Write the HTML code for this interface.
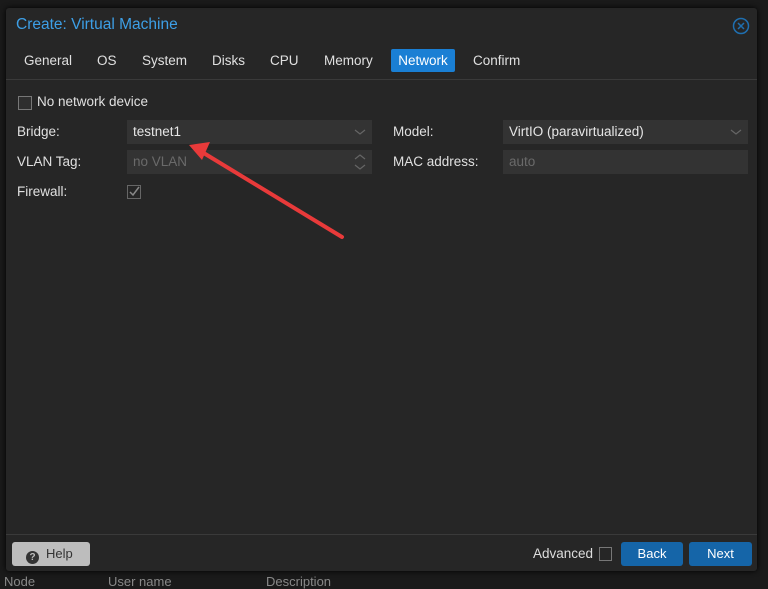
<!DOCTYPE html><html><head><style>
body{margin:0;width:768px;height:583px;background:#1a1a1a;font-family:"Liberation Sans",sans-serif;position:relative;overflow:hidden;color:#ddd}
.a{position:absolute}
.dlg{left:6px;top:8px;width:751px;height:563px;background:#262626;border-radius:3px;box-shadow:0 0 6px #000}
.t{font-size:13.5px;color:#e0e0e0}
.f{background:#333;height:24px}
.ft{font-size:13.5px;color:#e6e6e6;line-height:24px;padding-left:6px}
.btn{background:#1565a8;color:#fff;font-size:13px;text-align:center;line-height:24px;border-radius:3px;height:24px}
</style></head><body>
<div class="a dlg"></div>
<div class="a" style="left:16px;top:16px;font-size:15.5px;color:#3d9fe6">Create: Virtual Machine</div>
<svg class="a" style="left:732px;top:17px" width="18" height="18"><circle cx="9" cy="9" r="7.5" fill="none" stroke="#1f6fb0" stroke-width="1.5"/><path d="M6 6l6 6M12 6l-6 6" stroke="#1f6fb0" stroke-width="1.5"/></svg>
<div class="a t" style="left:24px;top:53px">General</div>
<div class="a t" style="left:97px;top:53px">OS</div>
<div class="a t" style="left:142px;top:53px">System</div>
<div class="a t" style="left:212px;top:53px">Disks</div>
<div class="a t" style="left:270px;top:53px">CPU</div>
<div class="a t" style="left:324px;top:53px">Memory</div>
<div class="a t" style="left:391px;top:49px;width:64px;height:23px;background:#1a7fd4;border-radius:2px;line-height:23px;text-align:center;color:#fff">Network</div>
<div class="a t" style="left:473px;top:53px">Confirm</div>
<div class="a" style="left:6px;top:79px;width:751px;height:1px;background:#3a3a3a"></div>
<div class="a" style="left:18px;top:96px;width:12px;height:12px;border:1px solid #777;background:#2e2e2e"></div>
<div class="a t" style="left:37px;top:94px">No network device</div>
<div class="a t" style="left:17px;top:124px">Bridge:</div>
<div class="a f" style="left:127px;top:120px;width:245px"><div class="ft">testnet1</div></div>
<svg class="a" style="left:354px;top:128px" width="12" height="8"><path d="M1 2l5 4 5-4" fill="none" stroke="#666" stroke-width="1.2"/></svg>
<div class="a t" style="left:17px;top:154px">VLAN Tag:</div>
<div class="a f" style="left:127px;top:150px;width:245px"><div class="ft" style="color:#6a6a6a">no VLAN</div></div>
<svg class="a" style="left:354px;top:152px" width="12" height="20"><path d="M1 7l5-4 5 4M1 13l5 4 5-4" fill="none" stroke="#666" stroke-width="1.2"/></svg>
<div class="a t" style="left:17px;top:184px">Firewall:</div>
<div class="a" style="left:127px;top:185px;width:12px;height:12px;border:1px solid #666"></div>
<svg class="a" style="left:127px;top:185px" width="14" height="14"><path d="M3 7l3 3 6-8" fill="none" stroke="#888" stroke-width="1.5"/></svg>
<div class="a t" style="left:393px;top:124px">Model:</div>
<div class="a f" style="left:503px;top:120px;width:245px"><div class="ft">VirtIO (paravirtualized)</div></div>
<svg class="a" style="left:730px;top:128px" width="12" height="8"><path d="M1 2l5 4 5-4" fill="none" stroke="#666" stroke-width="1.2"/></svg>
<div class="a t" style="left:393px;top:154px">MAC address:</div>
<div class="a f" style="left:503px;top:150px;width:245px"><div class="ft" style="color:#6a6a6a">auto</div></div>
<svg class="a" style="left:0;top:0" width="768" height="583"><line x1="342" y1="237" x2="202" y2="152" stroke="#e83a3a" stroke-width="4" stroke-linecap="round"/><polygon points="189,145 210,142 202,160" fill="#e83a3a"/></svg>
<div class="a" style="left:6px;top:534px;width:751px;height:1px;background:#3a3a3a"></div>
<div class="a" style="left:12px;top:542px;width:78px;height:24px;background:#bdbdbd;border-radius:3px;color:#333;font-size:13px;line-height:24px"><span style="display:inline-block;width:13px;height:13px;border-radius:50%;background:#333;color:#bdbdbd;font-size:10px;line-height:13px;text-align:center;margin:0 7px 0 14px;font-weight:bold;vertical-align:-2px">?</span>Help</div>
<div class="a" style="left:533px;top:546px;font-size:13.5px;color:#ddd">Advanced</div>
<div class="a" style="left:599px;top:547px;width:11px;height:12px;border:1px solid #777"></div>
<div class="a btn" style="left:621px;top:542px;width:62px">Back</div>
<div class="a btn" style="left:689px;top:542px;width:63px">Next</div>
<div class="a" style="left:4px;top:574px;font-size:13px;color:#888">Node</div>
<div class="a" style="left:108px;top:574px;font-size:13px;color:#888">User name</div>
<div class="a" style="left:266px;top:574px;font-size:13px;color:#888">Description</div>
</body></html>
